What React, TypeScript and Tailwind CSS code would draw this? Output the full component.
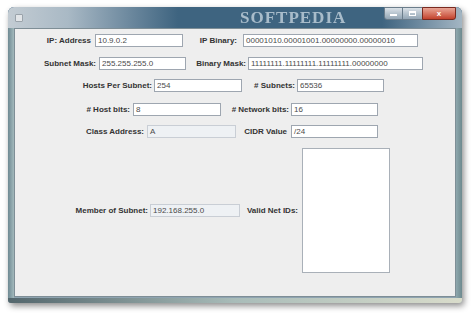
import React from "react";

const Field = ({ value, w, ml, readOnly = false }: { value: string; w: string; ml: string; readOnly?: boolean }) => (
  <div
    className={`${w} ${ml} h-[13px] flex items-center pl-[2px] text-[8px] leading-none text-[#4a4a4a] border ${
      readOnly ? "bg-[#eef1f4] border-[#c9ced5]" : "bg-white border-[#9ea6b0]"
    }`}
  >
    {value}
  </div>
);

const Label = ({ text, w }: { text: string; w: string }) => (
  <div className={`${w} shrink-0 text-right text-[8px] font-bold leading-none text-[#333] whitespace-nowrap`}>{text}</div>
);

const App = () => {
  return (
    <div className="w-[474px] h-[315px] bg-white pt-[7px] pl-[8px]" style={{ fontFamily: '"Liberation Sans", Arial, sans-serif' }}>
      {/* Window */}
      <div className="w-[454px] h-[296px] rounded-t-[6px] rounded-b-[3px] bg-[#8ea3b0] shadow-[2px_3px_6px_rgba(0,0,0,0.45)] flex flex-col overflow-hidden">
        {/* Title bar */}
        <div className="h-[21px] shrink-0 flex items-stretch bg-[#3e6480]">
          <div className="w-[60px] bg-linear-to-r from-[#c3ccd3] to-[#a9b9c5] flex items-center">
            <div className="ml-[7px] w-[8px] h-[8px] rounded-[1px] bg-[#e2e5e8] border border-[#9aa3aa]" />
          </div>
          <div className="w-[110px] bg-linear-to-r from-[#a9b9c5] to-[#3e6480]" />
          <div className="flex-1 flex items-center">
            <div className="ml-[62px] text-[17px] font-bold tracking-[1px] text-[#d6e2ea] opacity-70 blur-[0.6px]" style={{ fontFamily: '"Liberation Serif", serif' }}>
              SOFTPEDIA
            </div>
          </div>
          <div className="w-[80px] bg-linear-to-r from-[#3e6480] to-[#a4b6c3] flex items-start justify-end pr-[6px]">
            <div className="flex">
              <div className="w-[19px] h-[13px] rounded-bl-[3px] bg-linear-to-b from-[#dbe2e8] to-[#93a6b5] border border-[#6b7d8b] flex items-center justify-center">
                <div className="w-[7px] h-[2px] bg-white mt-[3px]" />
              </div>
              <div className="w-[19px] h-[13px] bg-linear-to-b from-[#dbe2e8] to-[#93a6b5] border-y border-[#6b7d8b] flex items-center justify-center">
                <div className="w-[7px] h-[5px] border border-white border-t-2" />
              </div>
              <div className="w-[34px] h-[13px] rounded-br-[3px] bg-linear-to-b from-[#e8a596] to-[#c2402c] border border-[#7a2a20] flex items-center justify-center text-white text-[8px] font-bold leading-none">
                x
              </div>
            </div>
          </div>
        </div>

        <div className="flex flex-1">
          <div className="w-[6px] bg-linear-to-r from-[#6f8a93] to-[#a3b9bc]" />
          {/* Content */}
          <div className="w-[442px] h-[269px] bg-[#eeeeee] border border-[#7e8e96] flex flex-col pt-[5px]">
            <div className="flex items-center h-[13px]">
              <Label text="IP: Address" w="w-[76px]" />
              <Field value="10.9.0.2" ml="ml-[4px]" w="w-[88px]" />
              <Label text="IP Binary:" w="w-[54px]" />
              <Field value="00001010.00001001.00000000.00000010" ml="ml-[6px]" w="w-[175px]" />
            </div>
            <div className="flex items-center h-[13px] mt-[10px]">
              <Label text="Subnet Mask:" w="w-[81px]" />
              <Field value="255.255.255.0" ml="ml-[3px]" w="w-[87px]" />
              <Label text="Binary Mask:" w="w-[60px]" />
              <Field value="11111111.11111111.11111111.00000000" ml="ml-[2px]" w="w-[175px]" />
            </div>
            <div className="flex items-center h-[13px] mt-[9px]">
              <Label text="Hosts Per Subnet:" w="w-[137px]" />
              <Field value="254" ml="ml-[2px]" w="w-[88px]" />
              <Label text="# Subnets:" w="w-[53px]" />
              <Field value="65536" ml="ml-[2px]" w="w-[87px]" />
            </div>
            <div className="flex items-center h-[13px] mt-[11px]">
              <Label text="# Host bits:" w="w-[115px]" />
              <Field value="8" ml="ml-[3px]" w="w-[88px]" />
              <Label text="# Network bits:" w="w-[68px]" />
              <Field value="16" ml="ml-[2px]" w="w-[87px]" />
            </div>
            <div className="flex items-center h-[13px] mt-[9px]">
              <Label text="Class Address:" w="w-[129px]" />
              <Field value="A" ml="ml-[3px]" w="w-[89px]" readOnly />
              <Label text="CIDR Value" w="w-[51px]" />
              <Field value="/24" ml="ml-[4px]" w="w-[87px]" />
            </div>
            <div className="flex items-center mt-[10px]">
              <Label text="Member of Subnet:" w="w-[133px]" />
              <Field value="192.168.255.0" ml="ml-[2px]" w="w-[90px]" readOnly />
              <Label text="Valid Net IDs:" w="w-[58px]" />
              <div className="ml-[4px] w-[88px] h-[125px] bg-white border border-[#a9b0b8]" />
            </div>
          </div>
          <div className="w-[6px] bg-linear-to-r from-[#8ea7ad] to-[#6e8a8f]" />
        </div>
        <div className="h-[5px] bg-linear-to-r from-[#54676d] via-[#a9bcb9] to-[#d9dccb]" />
      </div>
    </div>
  );
};

export default App;
